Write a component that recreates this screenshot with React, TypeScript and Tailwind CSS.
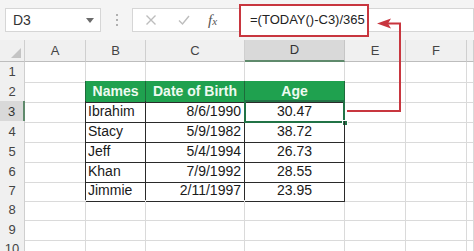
import React from "react";

const cols = "grid grid-cols-[25px_61px_60px_99px_100px_61px_61px_1fr]";

const data: [string, string, string][] = [
  ["Ibrahim", "8/6/1990", "30.47"],
  ["Stacy", "5/9/1982", "38.72"],
  ["Jeff", "5/4/1994", "26.73"],
  ["Khan", "7/9/1992", "28.55"],
  ["Jimmie", "2/11/1997", "23.95"],
];

const rowHeights = [
  "h-[19px]",
  "h-[20px]",
  "h-[20px]",
  "h-[20px]",
  "h-[20px]",
  "h-[19px]",
  "h-[20px]",
  "h-[20px]",
  "h-[19px]",
  "h-[20px]",
];

const grid = "border-r border-b border-[#dadada]";

function RowHeader({ n, selected }: { n: number; selected?: boolean }) {
  return (
    <div
      className={
        selected
          ? "flex items-center justify-center bg-[#d9d9d9] border-b border-[#c6c6c6] border-r-2 border-r-[#5f8a6c] text-[13px] text-[#333]"
          : "flex items-center justify-center bg-[#f0f0f0] border-r border-b border-r-[#cfcfcf] border-b-[#dadada] text-[13px] text-[#444]"
      }
    >
      {n}
    </div>
  );
}

function Empty({ extra }: { extra?: string }) {
  return <div className={extra ?? grid} />;
}

export default function App() {
  return (
    <div className="relative w-[474px] h-[251px] overflow-hidden bg-white font-['Liberation_Sans',Arial,sans-serif]">
      {/* Toolbar */}
      <div className="h-[40px] bg-[#f4f4f4] flex items-center">
        <div className="ml-[5px] w-[96px] h-[24px] bg-white border border-[#d6d6d6] flex items-center justify-between pl-[7px] pr-[6px]">
          <span className="text-[14px] text-[#333]">D3</span>
          <svg width="8" height="5" viewBox="0 0 8 5">
            <polygon points="0,0 8,0 4,5" fill="#6b6b6b" />
          </svg>
        </div>
        <div className="w-[31px] flex flex-col items-center gap-[3px]">
          <div className="w-[2px] h-[2px] bg-[#b0b0b0]" />
          <div className="w-[2px] h-[2px] bg-[#b0b0b0]" />
          <div className="w-[2px] h-[2px] bg-[#b0b0b0]" />
        </div>
        <div className="flex-1 h-[24px] bg-white border border-[#d6d6d6] flex items-center">
          <svg className="ml-[12px]" width="12" height="12" viewBox="0 0 12 12">
            <path d="M1.5 1.5 L10.5 10.5 M10.5 1.5 L1.5 10.5" stroke="#bdbdbd" strokeWidth="1.4" fill="none" />
          </svg>
          <svg className="ml-[21px]" width="12" height="12" viewBox="0 0 12 12">
            <path d="M1 6.5 L4.5 10 L11 2" stroke="#bdbdbd" strokeWidth="1.4" fill="none" />
          </svg>
          <span className="ml-[18px] w-[14px] font-['Liberation_Serif',serif] italic text-[15px] text-[#555] leading-none">
            f<span className="text-[11px]">x</span>
          </span>
          <div className="ml-[17px] w-[130px] h-[33px] border-2 border-[#c8363f] bg-white flex items-center pl-[9px] text-[13px] text-[#222]">
            =(TODAY()-C3)/365
          </div>
        </div>
      </div>

      {/* Column header */}
      <div className={`${cols} h-[22px] bg-[#f0f0f0] text-[13px] text-[#444]`}>
        <div className="relative border-r border-b border-r-[#cfcfcf] border-b-[#bdbdbd]">
          <svg className="absolute right-[3px] bottom-[3px]" width="10" height="10" viewBox="0 0 10 10">
            <polygon points="10,0 10,10 0,10" fill="#c4c4c4" />
          </svg>
        </div>
        {["A", "B", "C"].map((c) => (
          <div key={c} className="flex items-center justify-center border-r border-b border-r-[#cfcfcf] border-b-[#bdbdbd]">
            {c}
          </div>
        ))}
        <div className="flex items-center justify-center bg-[#d9d9d9] border-r border-r-[#c6c6c6] border-b-2 border-b-[#5f8a6c] text-[#333]">
          D
        </div>
        {["E", "F", ""].map((c, i) => (
          <div key={i} className="flex items-center justify-center border-r border-b border-r-[#cfcfcf] border-b-[#bdbdbd]">
            {c}
          </div>
        ))}
      </div>

      {/* Row 1 */}
      <div className={`${cols} ${rowHeights[0]}`}>
        <RowHeader n={1} />
        <Empty />
        <Empty extra="border-r border-b border-r-[#dadada] border-b-[#1d6b3b]" />
        <Empty extra="border-r border-b border-r-[#dadada] border-b-[#1d6b3b]" />
        <Empty extra="border-r border-b border-r-[#dadada] border-b-[#1d6b3b]" />
        <Empty />
        <Empty />
        <Empty />
      </div>

      {/* Row 2 - table header */}
      <div className={`${cols} ${rowHeights[1]}`}>
        <RowHeader n={2} />
        <Empty extra="border-r border-b border-r-[#1d6b3b] border-b-[#dadada]" />
        {["Names", "Date of Birth", "Age"].map((h) => (
          <div
            key={h}
            className="flex items-center justify-center bg-[#1fa14f] border-r border-b border-r-[#1d6b3b] border-b-[#2a2a2a] text-[14px] font-bold text-[#eefaf1]"
          >
            {h}
          </div>
        ))}
        <Empty />
        <Empty />
        <Empty />
      </div>

      {/* Data rows */}
      {data.map(([name, dob, age], i) => (
        <div key={name} className={`${cols} ${rowHeights[i + 2]}`}>
          <RowHeader n={i + 3} selected={i === 0} />
          <Empty extra="border-r border-b border-r-[#2a2a2a] border-b-[#dadada]" />
          <div className="flex items-center pl-[2px] border-r border-b border-[#2a2a2a] text-[14px] text-[#1a1a1a]">
            {name}
          </div>
          <div className="flex items-center justify-end pr-[3px] border-r border-b border-[#2a2a2a] text-[14px] text-[#1a1a1a]">
            {dob}
          </div>
          <div className="relative flex items-center justify-center border-r border-b border-[#2a2a2a] text-[14px] text-[#1a1a1a]">
            {age}
            {i === 0 && (
              <>
                <div className="absolute left-[-1px] top-[-1px] right-[-1px] bottom-[-1px] border-2 border-[#217346]" />
                <div className="absolute right-[-4px] bottom-[-4px] w-[6px] h-[6px] bg-[#217346] border border-white" />
              </>
            )}
          </div>
          <Empty />
          <Empty />
          <Empty />
        </div>
      ))}

      {/* Rows 8-10 */}
      {[8, 9, 10].map((n, i) => (
        <div key={n} className={`${cols} ${rowHeights[i + 7]}`}>
          <RowHeader n={n} />
          <Empty />
          <Empty />
          <Empty />
          <Empty />
          <Empty />
          <Empty />
          <Empty />
        </div>
      ))}

      {/* Arrow overlay */}
      <svg className="absolute left-0 top-0 pointer-events-none" width="474" height="251" viewBox="0 0 474 251">
        <path d="M347 111 H400 V23.5 H387" stroke="#c8363f" strokeWidth="2" fill="none" />
        <polygon points="377,23.5 391,18.5 388,23.5 391,28.5" fill="#c8363f" />
      </svg>
    </div>
  );
}
